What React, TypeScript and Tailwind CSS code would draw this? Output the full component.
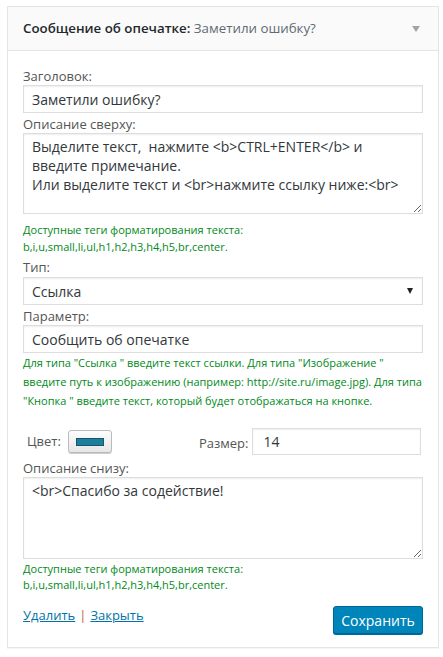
import React from 'react';

const Help = ({ lines, lh }: { lines: string[]; lh: string }) => (
  <div className={`text-[11px] whitespace-nowrap text-[#008a20] ${lh}`}>
    {lines.map((l) => (
      <div key={l}>{l}</div>
    ))}
  </div>
);

const Label = ({ children, className = '' }: { children: React.ReactNode; className?: string }) => (
  <div className={`text-[13px] text-[#555] leading-[18px] ${className}`}>{children}</div>
);

const inputCls =
  'block w-full h-[28px] border border-[#ddd] shadow-[inset_0_1px_2px_rgba(0,0,0,0.07)] px-[8px] text-[14px] text-[#32373c] outline-none bg-white';

const tagLines = ['Доступные теги форматирования текста:', 'b,i,u,small,li,ul,h1,h2,h3,h4,h5,br,center.'];

const App = () => {
  return (
    <div className="w-[443px] h-[657px] bg-white pt-[6px] pl-[7px]" style={{ fontFamily: '"Open Sans", "Noto Sans", sans-serif' }}>
      <div className="w-[432px] border border-[#e5e5e5] shadow-[0_1px_1px_rgba(0,0,0,0.04)] bg-white">
        <div className="h-[44px] bg-[#fafafa] border-b border-[#e5e5e5] flex items-center pl-[15px] pr-[18px]">
          <div className="text-[13.3px] text-[#23282d] flex-1">
            <span className="font-semibold">Сообщение об опечатке:</span>{' '}
            <span className="text-[#606a73]">Заметили ошибку?</span>
          </div>
          <svg width="8" height="6" viewBox="0 0 8 6">
            <path d="M0 0h8L4 6z" fill="#a0a5aa" />
          </svg>
        </div>

        <div className="px-[15px] pt-[16px] pb-[13px]">
          <Label>Заголовок:</Label>
          <input className={inputCls} defaultValue="Заметили ошибку?" readOnly />
          <Label className="mt-[2px]">Описание сверху:</Label>
          <textarea
            className="block w-full h-[81px] border border-[#ddd] shadow-[inset_0_1px_2px_rgba(0,0,0,0.07)] px-[8px] py-[3px] text-[14px] leading-[19px] text-[#32373c] outline-none"
            defaultValue={'Выделите текст,  нажмите <b>CTRL+ENTER</b> и введите примечание.\nИли выделите текст и <br>нажмите ссылку ниже:<br>'}
            readOnly
          />
          <div className="mt-[7px]">
            <Help lines={tagLines} lh="leading-[17px]" />
          </div>

          <Label className="mt-[2px] leading-[20px]">Тип:</Label>
          <div className="h-[28px] border border-[#ddd] shadow-[inset_0_1px_2px_rgba(0,0,0,0.07)] flex items-center pl-[8px] pr-[9px] text-[14px] text-[#32373c]">
            <span className="flex-1">Ссылка</span>
            <svg width="6" height="6" viewBox="0 0 6 6">
              <path d="M0 0h6L3 6z" fill="#222" />
            </svg>
          </div>
          <Label className="mt-[2px]">Параметр:</Label>
          <input className={inputCls} defaultValue="Сообщить об опечатке" readOnly />
          <Help
            lh="leading-[19px]"
            lines={[
              'Для типа "Ссылка " введите текст ссылки. Для типа "Изображение "',
              'введите путь к изображению (например: http://site.ru/image.jpg). Для типа',
              '"Кнопка " введите текст, который будет отображаться на кнопке.',
            ]}
          />

          <div className="flex items-center mt-[18px] h-[27px]">
            <span className="ml-[4px] text-[13px] text-[#555]">Цвет:</span>
            <div className="ml-[7px] w-[44px] h-[23px] rounded-[3px] border border-[#bbb] bg-gradient-to-b from-[#fdfdfd] to-[#e6e6e6] flex items-center justify-center shadow-[0_1px_0_#ccc]">
              <div className="w-[28px] h-[8px] bg-[#1d7f9c] border border-[#14566b]" />
            </div>
            <span className="ml-[87px] mt-[4px] text-[13px] text-[#555]">Размер:</span>
            <input className="ml-[4px] w-[169px] h-[27px] border border-[#ddd] shadow-[inset_0_1px_2px_rgba(0,0,0,0.07)] px-[10px] text-[14px] text-[#32373c] outline-none" defaultValue="14" readOnly />
          </div>

          <Label className="mt-[4px]">Описание снизу:</Label>
          <textarea
            className="block w-full h-[82px] border border-[#ddd] shadow-[inset_0_1px_2px_rgba(0,0,0,0.07)] px-[8px] py-[3px] text-[14px] leading-[19px] text-[#32373c] outline-none"
            defaultValue="<br>Спасибо за содействие!"
            readOnly
          />
          <div className="mt-[2px]">
            <Help lines={tagLines} lh="leading-[16px]" />
          </div>

          <div className="flex items-start justify-between mt-[13px]">
            <div className="text-[13px]">
              <a href="#" className="text-[#0073aa] underline">Удалить</a>
              <span className="text-[#c0583a] mx-[4px]">|</span>
              <a href="#" className="text-[#0073aa] underline">Закрыть</a>
            </div>
            <button className="w-[90px] h-[28px] rounded-[3px] bg-[#0085ba] border border-[#006799] shadow-[0_1px_0_#006799] text-white text-[14px]">
              Сохранить
            </button>
          </div>
        </div>
      </div>
    </div>
  );
};

export default App;
